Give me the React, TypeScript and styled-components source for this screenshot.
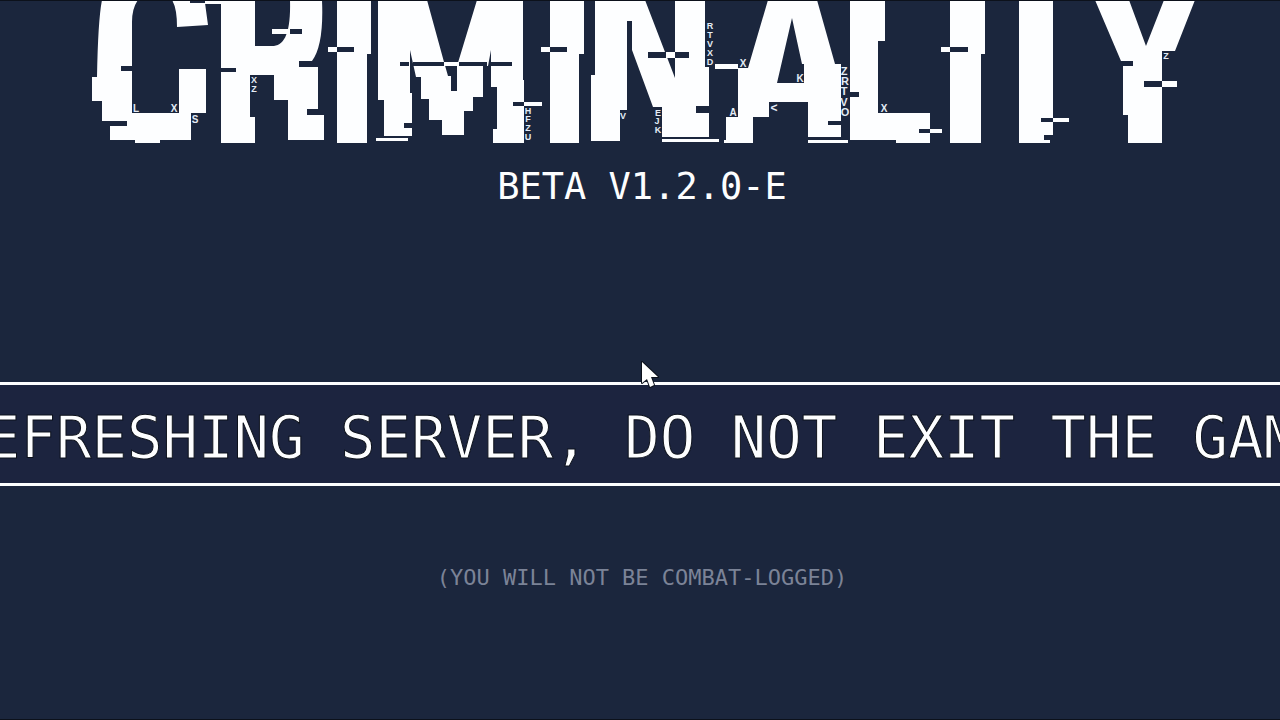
import React from "react";
import styled, { createGlobalStyle } from "styled-components";

const color = {
  page: "#1b263d",
  banner: "#1c243f",
  ink: "#fdfeff",
  edge: "#0c111b",
  muted: "#7b8397",
};

const GlobalStyle = createGlobalStyle`
  * { box-sizing: border-box; }
  body {
    margin: 0;
    background: ${color.page};
    color: ${color.ink};
    font-family: "DejaVu Sans Mono", "Liberation Mono", monospace;
  }
`;

const Screen = styled.main`
  position: relative;
  display: flex;
  flex-direction: column;
  min-height: 100vh;
  overflow: hidden;
  border-top: 1px solid ${color.edge};
  border-bottom: 1px solid ${color.edge};
`;

const Title = styled.h1`
  margin: 0;
  line-height: 0;
`;

const LogoArt = styled.svg`
  display: block;
  width: 100%;
  height: auto;
`;

const Version = styled.p`
  margin: 20px 0 0;
  padding-left: 4px;
  font-size: 37px;
  line-height: 46px;
  text-align: center;
`;

const Banner = styled.section`
  display: flex;
  justify-content: center;
  margin-top: 172px;
  padding: 8px 0 0 4px;
  border-top: 3px solid ${color.ink};
  border-bottom: 3px solid ${color.ink};
  background: ${color.banner};
`;

const BannerText = styled.p`
  flex: none;
  margin: 0;
  font-size: 59px;
  line-height: 90px;
  white-space: nowrap;
  -webkit-text-stroke: 1px ${color.edge};
`;

const Note = styled.p`
  margin: 78px 0 0;
  padding-left: 4px;
  color: ${color.muted};
  font-size: 22px;
  line-height: 28px;
  text-align: center;
`;

const Pointer = styled.svg`
  position: absolute;
  top: 50%;
  left: 50%;
  width: 20px;
  height: 28px;
`;

// Shifted slabs that build up the glitched wordmark.
const slabs = [
  "M102 0H138Q132 8 132 22V113H191V140H160V143H135V140H110V126H127V121H102V101H92V77H97Q98 20 102 0Z",
  "M172 0H190V3H205L208 25L177 27Q177 8 172 0Z",
  "M179 69H206V113H179Z",
  "M205 0H255V75H250V117H255V143H221V4H205Z",
  "M255 46H272C284 46 291 34 290 0H322Q324 45 312 61V67H318V109H307V115H324V140H288V100H274V75H250Z",
  "M272 29H290V34H272Z",
  "M337 0H371V54H367V143H337Z",
  "M328 47H337V52H328Z",
  "M378 0H427L444 62L448 76H451V91H457V66L477 0H523V80H524V143H493V129H497V87H491V50L488 66H483V97H473V111H464V135H442V120H429V99H421V77H416L410 50V93H412V136H384V100H378Z",
  "M444 62H459V66H444Z",
  "M376 138H408V141H376Z",
  "M524 102H542V106H524Z",
  "M550 0H584V54H579V143H550Z",
  "M541 47H550V52H541Z",
  "M595 0H645L675 78V0H705V67H709V137H662V107H653L632 50V21H627V110H620V141H591V75H595Z",
  "M666 52H675V58H666Z",
  "M662 139H719V142H662Z",
  "M715 64H738V69H715Z",
  "M768 0H817L835 64H841V137H808V102H769V117H753V143H724V140H726V117H738V68H748ZM792 18L777 83H804V64H802Z",
  "M808 140H848V143H808Z",
  "M850 0H885V41H878V113H930V143H896V140H850Z",
  "M930 129H942V133H930Z",
  "M950 0H985V54H981V143H950Z",
  "M941 47H950V52H941Z",
  "M1019 0H1053V143H1019Z",
  "M1053 118H1069V122H1053Z",
  "M1095 0H1129L1146 46L1164 0H1195L1175 51H1162V143H1128V115H1123V66H1121V61Z",
  "M1162 81H1177V87H1162Z",
];

// Thin scan-line cuts: x, y, width, height.
const cuts: [number, number, number, number][] = [
  [121, 66, 11, 5], [220, 68, 16, 4], [290, 29, 12, 5], [299, 61, 20, 6],
  [337, 47, 17, 5], [404, 123, 8, 5], [400, 62, 9, 4], [413, 62, 31, 4],
  [459, 62, 28, 4], [491, 62, 21, 4], [513, 102, 11, 4], [550, 47, 17, 5],
  [648, 52, 18, 6], [675, 52, 14, 6], [696, 106, 13, 7], [828, 121, 13, 4],
  [848, 92, 11, 5], [919, 129, 11, 4], [950, 47, 18, 5], [1041, 118, 12, 4],
  [1044, 135, 9, 5], [1050, 139, 3, 4], [1121, 61, 12, 5], [1144, 81, 18, 6],
];

const marks: [string, number, number, number][] = [
  ["L", 136, 112, 10], ["X", 174, 112, 10], ["S", 195, 123, 10],
  ["X", 254, 83, 9], ["Z", 254, 92, 9],
  ["H", 528, 114, 9], ["F", 528, 122, 9], ["Z", 528, 131, 9], ["U", 528, 140, 9],
  ["V", 623, 119, 9], ["E", 658, 116, 9], ["J", 657, 124, 9], ["K", 658, 133, 9],
  ["R", 710, 29, 9], ["T", 710, 38, 9], ["V", 710, 47, 9], ["X", 710, 56, 9], ["D", 710, 65, 9],
  ["X", 743, 67, 10], ["A", 733, 116, 10], ["K", 800, 82, 10], ["<", 774, 112, 12],
  ["Z", 844, 75, 11], ["R", 845, 85, 11], ["T", 844, 95, 11], ["V", 844, 106, 11], ["O", 845, 116, 11],
  ["X", 884, 112, 10], ["Z", 1166, 59, 9],
];

function Logo() {
  return (
    <LogoArt viewBox="0 1 1280 143" role="img" aria-label="Criminality">
      {slabs.map((d) => (
        <path key={d} d={d} fill={color.ink} fillRule="evenodd" />
      ))}
      {cuts.map(([x, y, width, height]) => (
        <rect key={`${x}-${y}`} x={x} y={y} width={width} height={height} fill={color.page} />
      ))}
      <g fill="#e4ecf6" fontFamily='"Liberation Sans", Arial, sans-serif' fontWeight="700" textAnchor="middle">
        {marks.map(([mark, x, y, size]) => (
          <text key={`${x}-${y}`} x={x} y={y} fontSize={size}>{mark}</text>
        ))}
      </g>
    </LogoArt>
  );
}

export default function App() {
  return (
    <>
      <GlobalStyle />
      <Screen>
        <Title><Logo /></Title>
        <Version>BETA V1.2.0-E</Version>
        <Banner>
          <BannerText>REFRESHING SERVER, DO NOT EXIT THE GAME</BannerText>
        </Banner>
        <Note>(YOU WILL NOT BE COMBAT-LOGGED)</Note>
        <Pointer viewBox="0 0 20 28" aria-hidden="true">
          <path
            d="M2 2V23L7 19L10 27L14 25L11 17H18Z"
            fill="#fff"
            stroke={color.edge}
            strokeWidth="2"
            strokeLinejoin="round"
            paintOrder="stroke"
          />
        </Pointer>
      </Screen>
    </>
  );
}
